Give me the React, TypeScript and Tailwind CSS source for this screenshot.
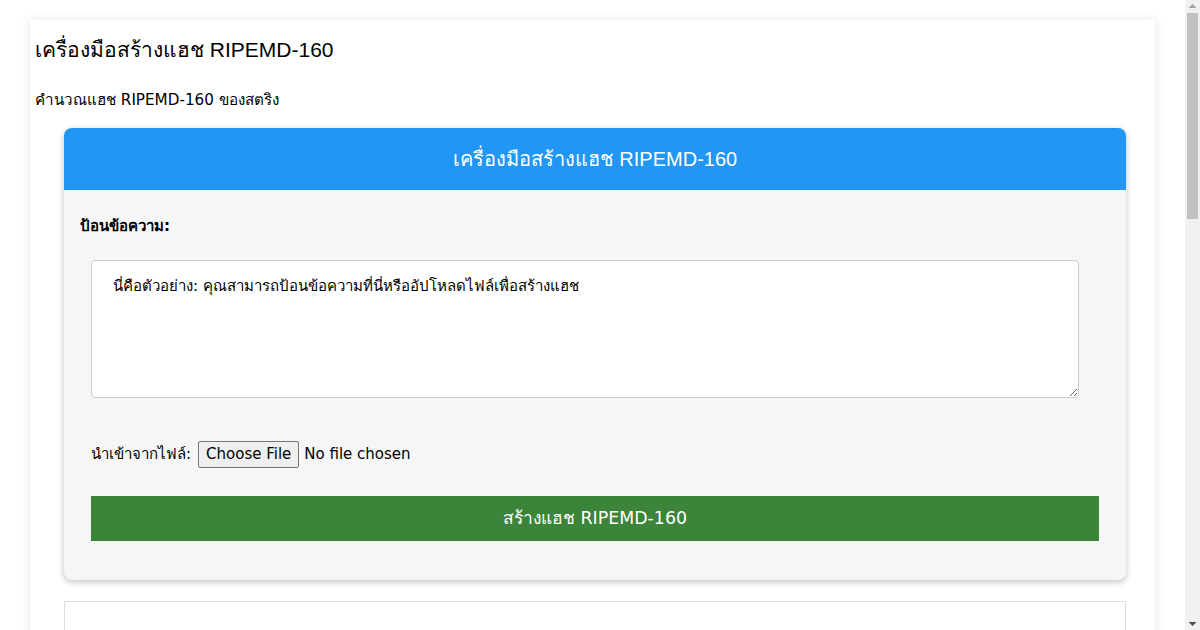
function Scrollbar() {
  return (
    <div className="flex h-full w-[15px] shrink-0 flex-col items-center bg-[#f1f1f1]">
      <svg width="15" height="12" viewBox="0 0 15 12" className="shrink-0">
        <path d="M3.5 8 L7.5 4 L11.5 8 Z" fill="#a3a3a3" />
      </svg>
      <div className="mt-px h-[206px] w-[11px] bg-[#c1c1c1]" />
      <div className="flex-1" />
      <svg width="15" height="12" viewBox="0 0 15 12" className="shrink-0">
        <path d="M3.5 4 L7.5 8 L11.5 4 Z" fill="#505050" />
      </svg>
    </div>
  );
}

export default function App() {
  return (
    <div className="flex h-screen overflow-hidden bg-white font-['DejaVu_Sans',sans-serif] text-black">
      <div className="w-[1185px] shrink-0 overflow-hidden">
        <div className="ml-[30px] mt-5 mb-10 w-[1125px] bg-white px-[5px] pb-10 pt-[15px] shadow-[0_0_10px_rgba(0,0,0,0.1)]">
          <h1 className="font-['Liberation_Sans',sans-serif] text-[21px] leading-[30px]">
            เครื่องมือสร้างแฮช RIPEMD-160
          </h1>
          <p className="mt-[23px] text-[15.2px] leading-[24px]">คำนวณแฮช RIPEMD-160 ของสตริง</p>

          <div className="ml-[29px] mt-[16px] w-[1062px] overflow-hidden rounded-lg bg-[#f6f6f6] shadow-[0_2px_6px_rgba(0,0,0,0.25)]">
            <div className="flex h-[62px] items-center justify-center bg-[#2196f3] font-['Liberation_Sans',sans-serif] text-[20px] text-white">
              เครื่องมือสร้างแฮช RIPEMD-160
            </div>
            <div className="px-4 pb-[39px] pt-6">
              <label className="block text-[15px] font-bold leading-[24px]">ป้อนข้อความ:</label>
              <textarea
                className="ml-[11px] mt-[22px] block h-[138px] w-[988px] resize-y rounded border border-[#ccc] bg-white px-[21px] pb-[12px] pt-[14px] text-[15px] leading-[22px] outline-none"
                defaultValue="นี่คือตัวอย่าง: คุณสามารถป้อนข้อความที่นี่หรืออัปโหลดไฟล์เพื่อสร้างแฮช"
              />
              <div className="ml-[11px] mt-[43px] flex items-center gap-[7px]">
                <span className="text-[15px]">นำเข้าจากไฟล์:</span>
                <input
                  type="file"
                  className="text-[15px] file:mr-[5px] file:rounded-[2px] file:border file:border-[#767676] file:bg-[#efefef] file:px-[7px] file:py-[1px] file:text-[15px]"
                />
              </div>
              <button className="mx-[11px] mt-[28px] block h-[45px] w-[1008px] bg-[#3b8439] text-[17.4px] text-white">
                สร้างแฮช RIPEMD-160
              </button>
            </div>
          </div>

          <div className="ml-[29px] mt-[21px] w-[1062px] border border-[#ddd] bg-white pb-[200px] pl-[34px] pt-[28px] text-[16px]">
            เกี่ยวกับ RIPEMD-160
          </div>
        </div>
      </div>
      <Scrollbar />
    </div>
  );
}
